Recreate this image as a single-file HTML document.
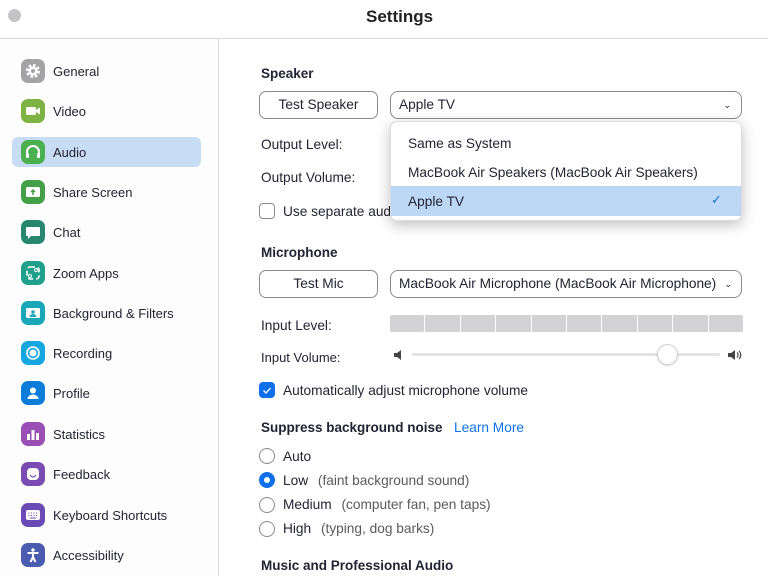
<!DOCTYPE html>
<html><head><meta charset="utf-8"><style>
*{margin:0;padding:0;box-sizing:border-box}
body{width:768px;height:576px;overflow:hidden;background:#fff;font-family:"Liberation Sans",sans-serif;color:#232333;font-size:13.7px;position:relative}
.a{position:absolute;white-space:nowrap}
.ic{position:absolute;left:21px;width:24px;height:24px;border-radius:7px}
.ic svg{width:24px;height:24px}
.lb{position:absolute;left:53px;font-size:13px}
.b{font-weight:bold;font-size:13.5px}
.btn{position:absolute;border:1px solid #8a8a8e;border-radius:7px;background:#fff;text-align:center;font-size:13.7px}
.dd{position:absolute;border:1px solid #8a8a8e;border-radius:8px;background:#fff;padding-left:8px;font-size:13.7px}
.cb{position:absolute;left:259px;width:16px;height:16px;border:1px solid #8a8a8e;border-radius:4px;background:#fff}
.rd{position:absolute;left:259px;width:16px;height:16px;border:1px solid #8a8a8e;border-radius:50%;background:#fff}
.g{color:#5a5a5e}
</style></head><body>
<div class="a" style="left:8px;top:9px;width:13px;height:13px;border-radius:50%;background:#c4c4c6"></div>
<div class="a" style="left:366px;top:7px;font-weight:bold;font-size:17px;color:#222">Settings</div>
<div class="a" style="left:0;top:38px;width:768px;height:1px;background:#d8d8da"></div>
<div class="a" style="left:0;top:39px;width:218px;height:537px;background:#fdfdfd"></div>
<div class="a" style="left:218px;top:39px;width:1px;height:537px;background:#d8d8da"></div>
<div class="a" style="left:12px;top:137px;width:189px;height:30px;border-radius:6px;background:#c8dcf4"></div>

<div class="ic" style="top:59px;background:#a3a3a6"><svg viewBox="0 0 24 24"><circle cx="12" cy="12" r="5.5" fill="none" stroke="#fff" stroke-width="3" stroke-dasharray="2.5 1.8"/><circle cx="12" cy="12" r="4.5" fill="#fff"/><circle cx="12" cy="12" r="2" fill="#a3a3a6"/></svg></div>
<div class="lb" style="top:64px">General</div>
<div class="ic" style="top:99px;background:#7cb342"><svg viewBox="0 0 24 24"><rect x="5" y="8" width="10" height="8" rx="1.5" fill="#fff"/><path d="M15 11l4-2.5v7L15 13z" fill="#fff"/></svg></div>
<div class="lb" style="top:104px">Video</div>
<div class="ic" style="top:140px;background:#4caf50"><svg viewBox="0 0 24 24"><path d="M6 16v-4a6 6 0 0112 0v4" fill="none" stroke="#fff" stroke-width="2"/><rect x="5" y="13" width="3" height="5" rx="1" fill="#fff"/><rect x="16" y="13" width="3" height="5" rx="1" fill="#fff"/></svg></div>
<div class="lb" style="top:145px">Audio</div>
<div class="ic" style="top:180px;background:#43a047"><svg viewBox="0 0 24 24"><rect x="5" y="7" width="14" height="10" rx="1.5" fill="#fff"/><path d="M12 15v-5M10 12l2-2 2 2" stroke="#43a047" stroke-width="1.5" fill="none"/></svg></div>
<div class="lb" style="top:185px">Share Screen</div>
<div class="ic" style="top:220px;background:#26866e"><svg viewBox="0 0 24 24"><path d="M6 7h12a1 1 0 011 1v7a1 1 0 01-1 1h-8l-3 3v-3H6a1 1 0 01-1-1V8a1 1 0 011-1z" fill="#fff"/></svg></div>
<div class="lb" style="top:225px">Chat</div>
<div class="ic" style="top:261px;background:#1fa08a"><svg viewBox="0 0 24 24"><rect x="6" y="6" width="12" height="12" rx="3" fill="none" stroke="#fff" stroke-width="1.6" stroke-dasharray="5 3"/><circle cx="15" cy="9" r="1.5" fill="none" stroke="#fff"/><circle cx="9" cy="15" r="1.5" fill="none" stroke="#fff"/></svg></div>
<div class="lb" style="top:266px">Zoom Apps</div>
<div class="ic" style="top:301px;background:#1aa7b8"><svg viewBox="0 0 24 24"><rect x="5" y="7" width="14" height="10" rx="1.5" fill="#fff"/><circle cx="12" cy="11" r="1.8" fill="#1aa7b8"/><path d="M8.5 16a3.5 3 0 017 0z" fill="#1aa7b8"/></svg></div>
<div class="lb" style="top:306px">Background &amp; Filters</div>
<div class="ic" style="top:341px;background:#16a6e0"><svg viewBox="0 0 24 24"><circle cx="12" cy="12" r="6" fill="none" stroke="#fff" stroke-width="1.6"/><circle cx="12" cy="12" r="3.5" fill="#fff"/></svg></div>
<div class="lb" style="top:346px">Recording</div>
<div class="ic" style="top:381px;background:#0b7dd9"><svg viewBox="0 0 24 24"><circle cx="12" cy="9.5" r="3" fill="#fff"/><path d="M6.5 18a5.5 4.5 0 0111 0z" fill="#fff"/></svg></div>
<div class="lb" style="top:386px">Profile</div>
<div class="ic" style="top:422px;background:#9a4fb5"><svg viewBox="0 0 24 24"><rect x="6" y="12" width="3" height="6" fill="#fff"/><rect x="10.5" y="8" width="3" height="10" fill="#fff"/><rect x="15" y="11" width="3" height="7" fill="#fff"/></svg></div>
<div class="lb" style="top:427px">Statistics</div>
<div class="ic" style="top:462px;background:#7a4bb3"><svg viewBox="0 0 24 24"><rect x="6" y="6" width="12" height="12" rx="4" fill="#fff"/><path d="M9.5 13a2.5 2 0 005 0" fill="none" stroke="#7a4bb3" stroke-width="1.3"/></svg></div>
<div class="lb" style="top:467px">Feedback</div>
<div class="ic" style="top:503px;background:#6a4bb5"><svg viewBox="0 0 24 24"><rect x="5" y="7" width="14" height="10" rx="2" fill="#fff"/><path d="M7.5 10h1M10 10h1M12.5 10h1M15 10h1M7.5 12.5h1M10 12.5h1M12.5 12.5h1M15 12.5h1M9 15h6" stroke="#6a4bb5" stroke-width="1"/></svg></div>
<div class="lb" style="top:508px">Keyboard Shortcuts</div>
<div class="ic" style="top:543px;background:#4a5bb0"><svg viewBox="0 0 24 24"><circle cx="12" cy="7" r="1.7" fill="#fff"/><path d="M6.5 10h11M12 10v4M12 14l-2.5 5M12 14l2.5 5" stroke="#fff" stroke-width="2" fill="none"/></svg></div>
<div class="lb" style="top:548px">Accessibility</div>

<div class="a b" style="left:261px;top:66px">Speaker</div>
<div class="btn" style="left:259px;top:91px;width:119px;height:28px;line-height:26px">Test Speaker</div>
<div class="dd" style="left:390px;top:91px;width:352px;height:28px;line-height:26px">Apple TV<span style="position:absolute;right:10px;font-size:9px">&#8964;</span></div>
<div class="a" style="left:261px;top:137px">Output Level:</div>
<div class="a" style="left:261px;top:170px">Output Volume:</div>
<div class="cb" style="top:203px"></div>
<div class="a" style="left:283px;top:204px">Use separate aud</div>

<div class="a" style="left:390px;top:121px;width:352px;height:100px;background:#fff;border-radius:7px;box-shadow:0 4px 14px rgba(0,0,0,.25);border:1px solid #ddd;overflow:hidden">
<div class="a" style="left:17px;top:14px">Same as System</div>
<div class="a" style="left:17px;top:43px">MacBook Air Speakers (MacBook Air Speakers)</div>
<div class="a" style="left:0;top:64px;width:352px;height:30px;background:#bcd8f6"></div>
<div class="a" style="left:17px;top:72px">Apple TV</div>
<div class="a" style="left:320px;top:70px;color:#1a6fd8;font-size:13px">&#10003;</div>
</div>

<div class="a b" style="left:261px;top:245px">Microphone</div>
<div class="btn" style="left:259px;top:270px;width:119px;height:28px;line-height:26px">Test Mic</div>
<div class="dd" style="left:390px;top:270px;width:352px;height:28px;line-height:26px">MacBook Air Microphone (MacBook Air Microphone)<span style="position:absolute;right:9px;font-size:9px">&#8964;</span></div>
<div class="a" style="left:261px;top:318px">Input Level:</div>
<div class="a" style="left:390px;top:315px;width:353px;height:17px;display:flex;gap:1px">
<div style="flex:1;background:#d3d3d5;border-radius:2px"></div><div style="flex:1;background:#d3d3d5"></div><div style="flex:1;background:#d3d3d5"></div><div style="flex:1;background:#d3d3d5"></div><div style="flex:1;background:#d3d3d5"></div><div style="flex:1;background:#d3d3d5"></div><div style="flex:1;background:#d3d3d5"></div><div style="flex:1;background:#d3d3d5"></div><div style="flex:1;background:#d3d3d5"></div><div style="flex:1;background:#d3d3d5;border-radius:2px"></div></div>
<div class="a" style="left:261px;top:350px;font-size:13px">Input Volume:</div>
<svg class="a" style="left:393px;top:349px" width="10" height="12" viewBox="0 0 10 12"><path d="M1 4h3l4-3v10L4 8H1z" fill="#444"/></svg>
<div class="a" style="left:412px;top:353px;width:308px;height:3px;border-radius:2px;background:#e3e3e5"></div>
<div class="a" style="left:657px;top:344px;width:21px;height:21px;border-radius:50%;background:#fff;border:1px solid #d0d0d2;box-shadow:0 1px 2px rgba(0,0,0,.15)"></div>
<svg class="a" style="left:727px;top:349px" width="16" height="12" viewBox="0 0 16 12"><path d="M1 4h3l4-3v10L4 8H1z" fill="#444"/><path d="M10 3.5a3.5 3.5 0 010 5M12 2a5.5 5.5 0 010 8" fill="none" stroke="#444" stroke-width="1.2"/></svg>
<div class="cb" style="top:382px;background:#0e71eb;border-color:#0e71eb"><svg width="14" height="14" viewBox="0 0 14 14" style="position:absolute;left:0;top:0"><path d="M3.5 7.5l2.5 2.5 4.5-5" fill="none" stroke="#fff" stroke-width="1.3"/></svg></div>
<div class="a" style="left:283px;top:383px">Automatically adjust microphone volume</div>
<div class="a b" style="left:261px;top:420px">Suppress background noise</div>
<div class="a" style="left:454px;top:420px;color:#0e71eb">Learn More</div>
<div class="rd" style="top:448px"></div><div class="a" style="left:283px;top:449px">Auto</div>
<div class="rd" style="top:472px;border:5px solid #0e71eb"></div><div class="a" style="left:283px;top:473px">Low <span class="g" style="margin-left:6px">(faint background sound)</span></div>
<div class="rd" style="top:497px"></div><div class="a" style="left:283px;top:497px">Medium <span class="g" style="margin-left:6px">(computer fan, pen taps)</span></div>
<div class="rd" style="top:521px"></div><div class="a" style="left:283px;top:521px">High <span class="g" style="margin-left:6px">(typing, dog barks)</span></div>
<div class="a b" style="left:261px;top:558px">Music and Professional Audio</div>
</body></html>
